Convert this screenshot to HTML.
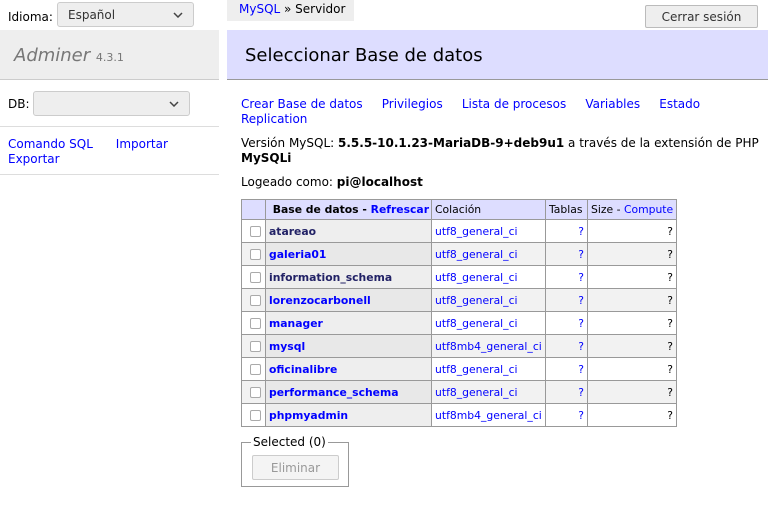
<!DOCTYPE html>
<html><head><meta charset="utf-8"><style>
*{box-sizing:border-box}
body{margin:0;width:768px;height:514px;overflow:hidden;background:#fff;font:12px "DejaVu Sans",Verdana,sans-serif;color:#000;position:relative}
a{color:#00f;text-decoration:none}
.abs{position:absolute;white-space:nowrap}
.sel{position:absolute;border:1px solid #ccc;border-radius:3px;background:#eee;height:25px}
.sel span{position:absolute;top:5px;left:10px;color:#333}
.sel svg{position:absolute;right:10px;top:9px}
table{border-collapse:collapse;position:absolute;left:241px;top:199px;font-size:10.8px;table-layout:fixed;width:435px}
td,th{border:1px solid #999;height:23px;padding:0 3px;white-space:nowrap;overflow:hidden}
thead td,thead th{background:#ddf;height:20px}
th{background:#eee;text-align:left;font-weight:bold}
tbody tr:nth-child(even) td{background:#f2f2f2}
tbody tr:nth-child(even) th{background:#e8e8e8}
.cb{width:11px;height:11px;border:1px solid #aaa;border-radius:2px;background:#fff;display:inline-block;margin-left:5px;vertical-align:middle}
.r{text-align:right}
</style></head><body>
<div class="abs" style="left:8px;top:10px">Idioma:</div>
<div class="sel" style="left:57px;top:2px;width:137px"><span>Español</span><svg width="10" height="6"><path d="M1 1l4 4 4-4" stroke="#444" stroke-width="1.5" fill="none"/></svg></div>
<div class="abs" style="left:0;top:30px;width:219px;height:50px;background:#eee;border-bottom:1px solid #ccc"></div>
<div class="abs" style="left:14px;top:45px;font-size:18px;font-style:italic;color:#777">Adminer <span style="font-size:11px;font-style:normal">4.3.1</span></div>
<div class="abs" style="left:8px;top:97px">DB:</div>
<div class="sel" style="left:33px;top:91px;width:157px;background:#eee"><svg width="10" height="6"><path d="M1 1l4 4 4-4" stroke="#444" stroke-width="1.5" fill="none"/></svg></div>
<div class="abs" style="left:0;top:126px;width:219px;border-top:1px solid #ddd"></div>
<div class="abs" style="left:8px;top:137px;line-height:15px"><a href="#">Comando SQL</a>&nbsp;&nbsp;&nbsp;&nbsp;&nbsp;&nbsp;<a href="#">Importar</a><br><a href="#">Exportar</a></div>
<div class="abs" style="left:0;top:174px;width:219px;border-top:1px solid #ddd"></div>

<div class="abs" style="left:227px;top:0;width:127px;height:21px;background:#eee;padding:2px 0 0 12px"><a href="#">MySQL</a> » Servidor</div>
<div class="abs" style="left:645px;top:5px;width:113px;height:23px;border:1px solid #bbb;border-radius:2px;background:#eee;text-align:center;padding-top:4px;color:#333">Cerrar sesión</div>
<div class="abs" style="left:227px;top:30px;width:541px;height:50px;background:#ddf;border-bottom:1px solid #999"></div>
<div class="abs" style="left:245px;top:45px;font-size:18px">Seleccionar Base de datos</div>
<div class="abs" style="left:241px;top:97px;line-height:15px"><a href="#">Crear Base de datos</a>&nbsp;&nbsp;&nbsp;&nbsp;&nbsp;<a href="#">Privilegios</a>&nbsp;&nbsp;&nbsp;&nbsp;&nbsp;<a href="#">Lista de procesos</a>&nbsp;&nbsp;&nbsp;&nbsp;&nbsp;<a href="#">Variables</a>&nbsp;&nbsp;&nbsp;&nbsp;&nbsp;<a href="#">Estado</a><br><a href="#">Replication</a></div>
<div class="abs" style="left:241px;top:136px;line-height:15px">Versión MySQL: <b>5.5.5-10.1.23-MariaDB-9+deb9u1</b> a través de la extensión de PHP<br><b>MySQLi</b></div>
<div class="abs" style="left:241px;top:175px">Logeado como: <b>pi@localhost</b></div>
<table>
<colgroup><col style="width:24px"><col style="width:166px"><col style="width:114px"><col style="width:42px"><col style="width:89px"></colgroup>
<thead><tr><td></td><th style="background:#ddf">&nbsp;Base de datos - <a href="#">Refrescar</a></th><td>Colación</td><td>Tablas</td><td>Size - <a href="#">Compute</a></td></tr></thead>
<tbody>
<tr><td><span class="cb"></span></td><th><a href="#" style="color:#226">atareao</a></th><td><a href="#">utf8_general_ci</a></td><td class="r"><a href="#">?</a></td><td class="r">?</td></tr>
<tr><td><span class="cb"></span></td><th><a href="#">galeria01</a></th><td><a href="#">utf8_general_ci</a></td><td class="r"><a href="#">?</a></td><td class="r">?</td></tr>
<tr><td><span class="cb"></span></td><th><a href="#" style="color:#226">information_schema</a></th><td><a href="#">utf8_general_ci</a></td><td class="r"><a href="#">?</a></td><td class="r">?</td></tr>
<tr><td><span class="cb"></span></td><th><a href="#">lorenzocarbonell</a></th><td><a href="#">utf8_general_ci</a></td><td class="r"><a href="#">?</a></td><td class="r">?</td></tr>
<tr><td><span class="cb"></span></td><th><a href="#">manager</a></th><td><a href="#">utf8_general_ci</a></td><td class="r"><a href="#">?</a></td><td class="r">?</td></tr>
<tr><td><span class="cb"></span></td><th><a href="#">mysql</a></th><td><a href="#">utf8mb4_general_ci</a></td><td class="r"><a href="#">?</a></td><td class="r">?</td></tr>
<tr><td><span class="cb"></span></td><th><a href="#">oficinalibre</a></th><td><a href="#">utf8_general_ci</a></td><td class="r"><a href="#">?</a></td><td class="r">?</td></tr>
<tr><td><span class="cb"></span></td><th><a href="#">performance_schema</a></th><td><a href="#">utf8_general_ci</a></td><td class="r"><a href="#">?</a></td><td class="r">?</td></tr>
<tr><td><span class="cb"></span></td><th><a href="#">phpmyadmin</a></th><td><a href="#">utf8mb4_general_ci</a></td><td class="r"><a href="#">?</a></td><td class="r">?</td></tr>
</tbody></table>
<div class="abs" style="left:241px;top:442px;width:108px;height:45px;border:1px solid #999"></div>
<div class="abs" style="left:251px;top:435px;background:#fff;padding:0 2px">Selected (0)</div>
<div class="abs" style="left:252px;top:455px;width:87px;height:25px;border:1px solid #ccc;border-radius:2px;background:#f4f4f4;color:#999;text-align:center;padding-top:5px">Eliminar</div>
</body></html>
